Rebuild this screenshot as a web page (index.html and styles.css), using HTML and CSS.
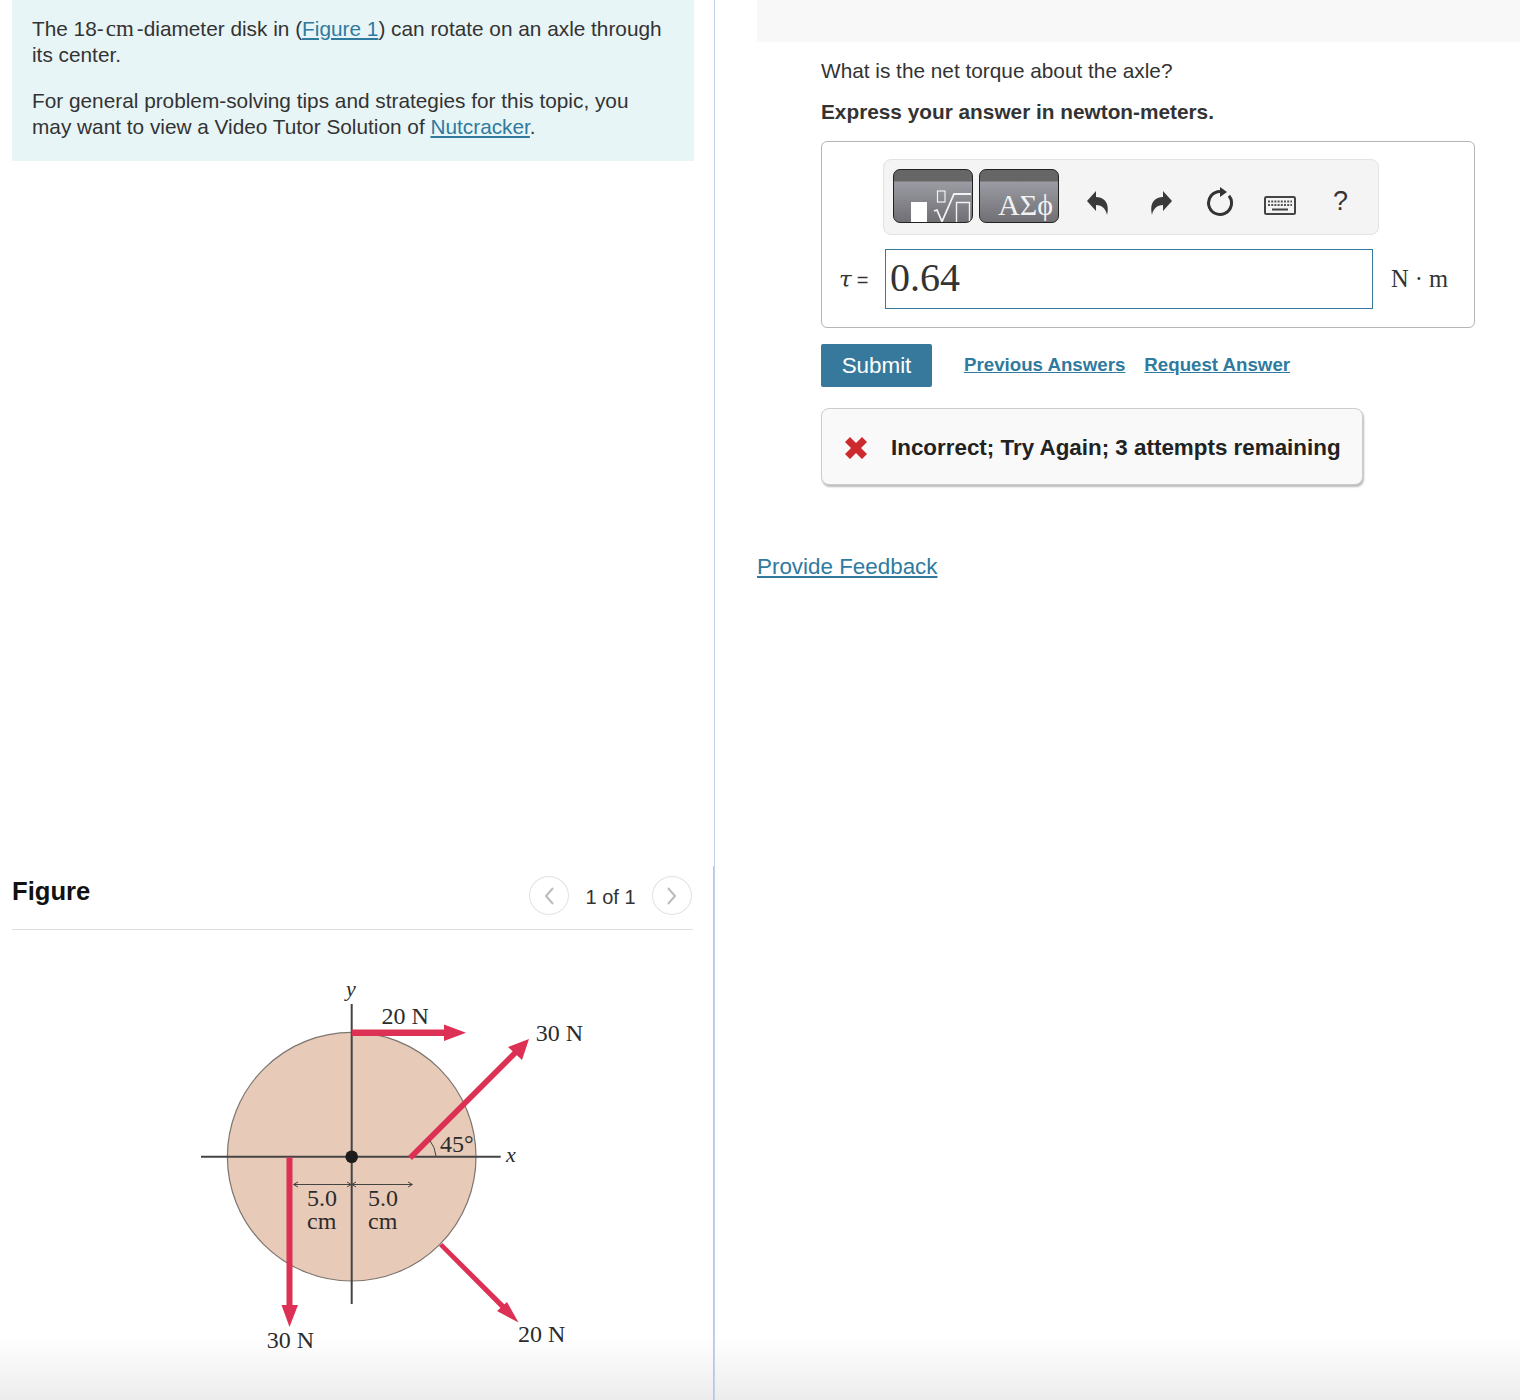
FILE: index.html
```html
<!DOCTYPE html>
<html lang="en">
<head>
<meta charset="UTF-8">
<meta name="viewport" content="width=device-width, initial-scale=1.0">
<title>Net torque about the axle</title>
<link rel="stylesheet" href="styles.css">
</head>
<body>

<div class="page">
    <div class="left-col">
        <div class="info-box">
            <p>The 18-<span class="unit">cm</span>-diameter disk in (<a href="#">Figure 1</a>) can rotate on an axle through its center.</p>
            <p>For general problem-solving tips and strategies for this topic, you may want to view a Video Tutor Solution of <a href="#">Nutcracker</a>.</p>
        </div>

        <div class="figure-head">
            <h2>Figure</h2>
            <div class="pager">
                <span class="pager-btn">
                    <svg width="12" height="20" viewBox="0 0 12 20"><path d="M10 2 L3 10 L10 18" fill="none" stroke="#bbb" stroke-width="2"/></svg>
                </span>
                <span class="pager-text">1 of 1</span>
                <span class="pager-btn">
                    <svg width="12" height="20" viewBox="0 0 12 20"><path d="M2 2 L9 10 L2 18" fill="none" stroke="#bbb" stroke-width="2"/></svg>
                </span>
            </div>
        </div>

        <svg class="diagram" width="410" height="390" viewBox="0 0 410 390">
            <circle cx="161.7" cy="186.7" r="124.3" fill="#e8cab8" stroke="#7d7570" stroke-width="1.2"/>
            <line x1="161.7" y1="34" x2="161.7" y2="334" stroke="#444" stroke-width="2"/>
            <line x1="11" y1="186.7" x2="310.7" y2="186.7" stroke="#444" stroke-width="2"/>
            <circle cx="161.7" cy="186.7" r="6.3" fill="#1c1c1c"/>

            <!-- force arrows -->
            <g fill="#dc3054">
                <rect x="161.7" y="59.5" width="94" height="6.5"/>
                <polygon points="254,54.5 276,62.7 254,71"/>
                <rect x="96.5" y="187.5" width="6" height="150"/>
                <polygon points="91.5,335 108,335 99.5,357"/>
                <polygon points="218,186 222,190 328,84 324,80"/>
                <polygon points="339,69 318,77 332,90"/>
                <polygon points="249,276 252.5,273 316,336 312,339.5"/>
                <polygon points="328.5,352.5 307,341 317,332"/>
            </g>

            <!-- dimension lines -->
            <g stroke="#444" fill="none" stroke-width="1">
                <line x1="104" y1="214.5" x2="222" y2="214.5"/>
                <path d="M108 212 L103.5 214.5 L108 217"/>
                <path d="M218 212 L222.5 214.5 L218 217"/>
                <path d="M157 212 L161 214.5 L157 217"/>
                <path d="M166 212 L162 214.5 L166 217"/>
                <path d="M240 170.7 Q245 177 246 186"/>
            </g>

            <g class="diagram-text">
                <text x="191.5" y="54">20 N</text>
                <text x="345.7" y="70.7">30 N</text>
                <text x="76.7" y="378">30 N</text>
                <text x="328" y="371.7">20 N</text>
                <text x="250" y="182">45°</text>
                <text x="117" y="236">5.0</text>
                <text x="178" y="236">5.0</text>
                <text x="117" y="259">cm</text>
                <text x="178" y="259">cm</text>
                <text class="axis" x="156" y="26">y</text>
                <text class="axis" x="316" y="192">x</text>
            </g>
        </svg>
    </div>

    <div class="right-col">
        <div class="top-bar"></div>
        <div class="part">
            <p class="question">What is the net torque about the axle?</p>
            <p class="express">Express your answer in newton-meters.</p>

            <div class="answer-box">
                <div class="toolbar">
                    <span class="tpl-btn">
                        <svg width="78" height="36" viewBox="0 0 78 36">
                            <rect x="17" y="16" width="16" height="20" fill="#fff"/>
                            <rect x="43.5" y="5" width="7.5" height="11" fill="none" stroke="#f2f2f2" stroke-width="1.2"/>
                            <path d="M40 25 L43 24 L48 35.5 L60 8 H77" fill="none" stroke="#f2f2f2" stroke-width="1.8"/>
                            <path d="M62.5 36 V16.5 H75.5 V36" fill="none" stroke="#f2f2f2" stroke-width="1.4"/>
                        </svg>
                    </span>
                    <span class="tpl-btn greek">ΑΣϕ</span>
                    <span class="tool-icons">
                        <svg class="tool-undo" width="22" height="25" viewBox="0 0 22 25"><path d="M0 11 L9 1 V7 C17 7 23 13 20 25 C19 19 15 15 9 15 V21 Z" fill="#3a3a3a"/></svg>
                        <svg class="tool-redo" width="22" height="25" viewBox="0 0 22 25"><path d="M22 11 L13 1 V7 C5 7 -1 13 2 25 C3 19 7 15 13 15 V21 Z" fill="#3a3a3a"/></svg>
                        <svg class="tool-reset" width="28" height="30" viewBox="0 0 28 30"><path d="M14.5 4.5 A11.5 11.5 0 1 0 23 8.8" fill="none" stroke="#333" stroke-width="3"/><path d="M14 0 L21 5 L14 10 Z" fill="#333"/></svg>
                        <svg class="tool-keys" width="32" height="19" viewBox="0 0 32 19">
                            <rect x="1" y="1" width="30" height="17" rx="1.5" fill="#f4f4f4" stroke="#444" stroke-width="2"/>
                            <path d="M4 5.5 H28 M4 9 H28" stroke="#555" stroke-width="2" stroke-dasharray="2 1.2"/>
                            <path d="M8 13.5 H24" stroke="#444" stroke-width="2"/>
                        </svg>
                        <span class="tool-help">?</span>
                    </span>
                </div>
                <div class="answer-row">
                    <span class="tau"><i>τ</i><span class="equals">=</span></span>
                    <div class="answer-input">0.64</div>
                    <span class="answer-unit">N · m</span>
                </div>
            </div>

            <div class="actions">
                <button class="submit-btn">Submit</button>
                <a class="action-link" href="#">Previous Answers</a>
                <a class="action-link" href="#">Request Answer</a>
            </div>

            <div class="feedback">
                <svg width="24" height="24" viewBox="0 0 24 24"><path d="M6 1 L12 7 L18 1 L23 6 L17 12 L23 18 L18 23 L12 17 L6 23 L1 18 L7 12 L1 6 Z" fill="#cc2a2c"/></svg>
                <span>Incorrect; Try Again; 3 attempts remaining</span>
            </div>
        </div>
        <a class="provide-link" href="#">Provide Feedback</a>
    </div>
</div>

<div class="bottom-fade"></div>

</body>
</html>
```

FILE: styles.css
```css
html, body {
    height: 1400px;
    overflow: hidden;
}
body {
    font-family: "Liberation Sans", Arial, sans-serif;
    color: #333;
    background: #fff;
    margin: 0;
    padding: 0;
    position: relative;
}
a {
    color: #2f7a9e;
}
p {
    margin: 0;
}
.page {
    display: flex;
    height: 1400px;
    position: relative;
    z-index: 1;
}

/* left column */
.left-col {
    width: 715px;
    flex: none;
    box-sizing: border-box;
    padding: 0 20px 0 12px;
    border-right: 1px solid #c3d3e6;
    position: relative;
}
.left-col::after {
    content: "";
    position: absolute;
    top: 866px;
    bottom: 0;
    right: 0;
    width: 1px;
    background: #b9c9df;
}
.info-box {
    background: #e8f5f6;
    padding: 16px 28px 19px 20px;
    font-size: 20.8px;
    line-height: 26px;
    height: 161px;
    box-sizing: border-box;
}
.info-box p + p {
    margin-top: 20px;
}
.unit {
    font-family: "Liberation Serif", serif;
    font-size: 23px;
    line-height: 20px;
    margin: 0 3px 0 2px;
}
.figure-head {
    margin: 715px 1px 0 0;
    height: 53px;
    display: flex;
    justify-content: space-between;
    align-items: flex-start;
    border-bottom: 1px solid #dcdfe3;
}
.figure-head h2 {
    margin: 0;
    font-size: 25.6px;
    line-height: 30px;
    color: #111;
}
.pager {
    display: flex;
    align-items: center;
    margin-right: 1px;
}
.pager-btn {
    width: 38px;
    height: 37px;
    border: 1px solid #e3e3e3;
    border-radius: 50%;
    display: flex;
    justify-content: center;
    align-items: center;
}
.pager-text {
    font-size: 20px;
    width: 83px;
    text-align: center;
    padding-top: 4px;
}
.diagram {
    display: block;
    margin: 40px 0 0 178px;
}
.diagram-text text {
    font-family: "Liberation Serif", serif;
    font-size: 24px;
    fill: #2c2c2c;
}
.diagram-text .axis {
    font-style: italic;
    font-size: 22px;
}

/* right column */
.right-col {
    flex: 1;
    padding-left: 42px;
}
.top-bar {
    height: 42px;
    background: #f8f8f8;
}
.part {
    padding-left: 64px;
}
.question {
    margin-top: 16px;
    font-size: 20.8px;
    line-height: 26px;
}
.express {
    margin-top: 15px;
    font-size: 20.8px;
    line-height: 26px;
    font-weight: bold;
}
.answer-box {
    width: 654px;
    height: 187px;
    box-sizing: border-box;
    margin-top: 16px;
    border: 1px solid #b5b5b5;
    border-radius: 6px;
    padding: 17px 0 0 61px;
}
.toolbar {
    width: 496px;
    height: 76px;
    box-sizing: border-box;
    background: #f4f4f4;
    border: 1px solid #e2e2e2;
    border-radius: 8px;
    padding: 9px;
    display: flex;
    gap: 6px;
}
.tpl-btn {
    width: 80px;
    height: 54px;
    box-sizing: border-box;
    border: 1px solid #222;
    border-radius: 7px;
    overflow: hidden;
    background: linear-gradient(to bottom, #666 0, #666 11px, #9b9ba3 12px, #6f6f74 100%);
    display: flex;
    align-items: flex-end;
}
.greek {
    font-family: "Liberation Serif", serif;
    font-size: 30px;
    line-height: 34px;
    color: #f2f2f2;
    justify-content: flex-end;
    padding-right: 5px;
}
.tool-icons {
    display: flex;
    align-items: center;
    margin-left: 22px;
    margin-top: 10px;
}
.tool-undo { margin-right: 41px; }
.tool-redo { margin-right: 34px; }
.tool-reset { margin-right: 30px; }
.tool-keys { margin-right: 37px; margin-top: 7px; }
.tool-help {
    font-size: 27px;
    color: #333;
    margin-top: -2px;
}
.answer-row {
    display: flex;
    align-items: center;
    margin: 14px 0 0 -44px;
}
.tau {
    width: 46px;
    flex: none;
    box-sizing: border-box;
    font-family: "DejaVu Serif", serif;
    font-size: 23px;
    white-space: nowrap;
}
.equals {
    font-family: "Liberation Sans", Arial, sans-serif;
    font-size: 20px;
    margin-left: 5px;
}
.answer-input {
    width: 488px;
    height: 60px;
    flex: none;
    box-sizing: border-box;
    border: 1px solid #37799c;
    font-family: "Liberation Serif", serif;
    font-size: 40px;
    line-height: 56px;
    padding-left: 4px;
}
.answer-unit {
    font-family: "Liberation Serif", serif;
    font-size: 24.5px;
    margin-left: 18px;
    white-space: nowrap;
}
.actions {
    display: flex;
    align-items: flex-start;
    margin-top: 16px;
}
.submit-btn {
    width: 111px;
    height: 43px;
    border: none;
    border-radius: 2px;
    background: #37799c;
    color: #fff;
    font-family: "Liberation Sans", Arial, sans-serif;
    font-size: 22.4px;
    margin-right: 32px;
}
.action-link {
    font-size: 18.7px;
    font-weight: bold;
    line-height: 42px;
    margin-right: 19px;
}
.feedback {
    width: 542px;
    height: 77px;
    box-sizing: border-box;
    margin-top: 21px;
    background: #f9f9f9;
    border: 1px solid #ccc;
    border-radius: 8px;
    box-shadow: 1px 2px 2px #bbb;
    display: flex;
    align-items: center;
    padding: 2px 0 0 22px;
    gap: 23px;
    font-size: 22.4px;
    font-weight: bold;
    color: #222;
    white-space: nowrap;
}
.provide-link {
    display: inline-block;
    margin-top: 68px;
    font-size: 22.4px;
    line-height: 28px;
}

/* fade strip over the bottom of the window */
.bottom-fade {
    position: absolute;
    left: 0;
    right: 0;
    bottom: 0;
    height: 62px;
    background: linear-gradient(to bottom, rgba(236, 236, 236, 0), #ececec);
}
```
